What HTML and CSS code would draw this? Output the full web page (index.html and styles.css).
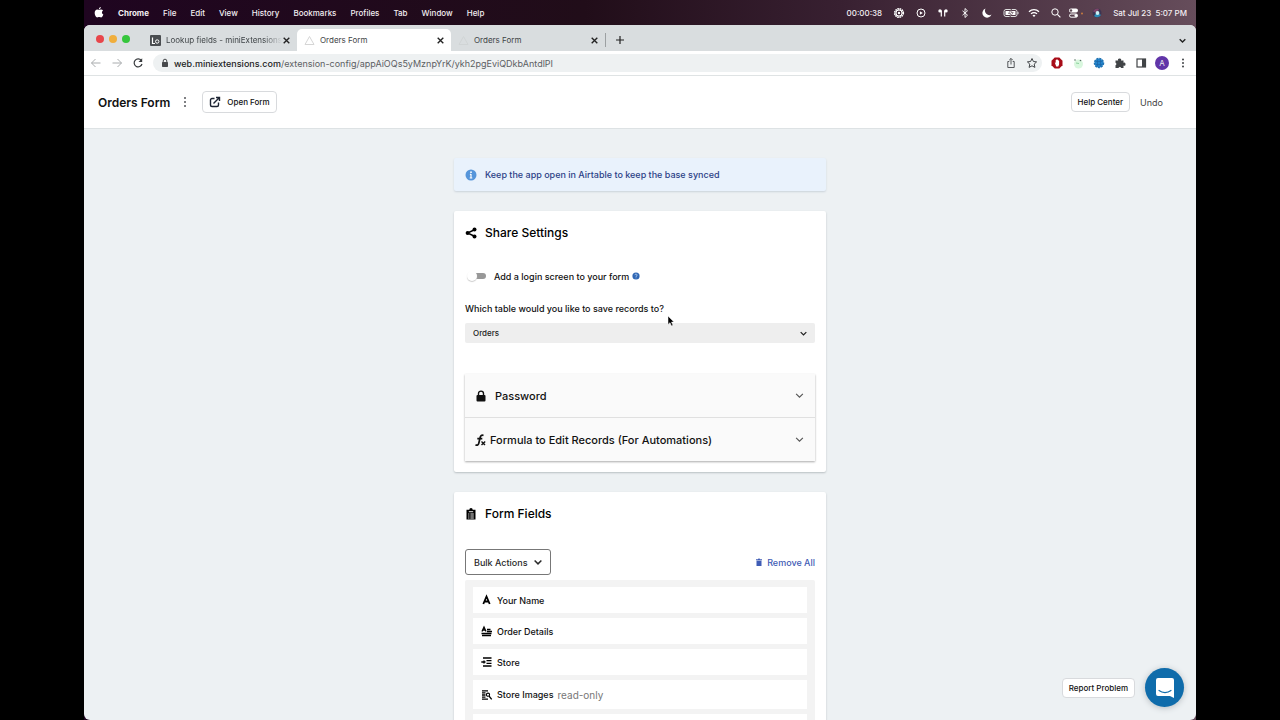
FILE: index.html
```html
<!DOCTYPE html>
<html lang="en">
<head>
    <meta charset="utf-8">
    <title>Orders Form</title>
    <link rel="stylesheet" href="styles.css">
</head>
<body>
    <div class="screen">
        <nav class="menubar">
            <div class="menus">
                <svg class="apple" viewBox="0 0 16 18"><path fill="#fff" d="M11 0c.2 1.700-1.300 3.700-3.100 3.700C7.700 2 9.300.2 11 0zM8 4.700c.8 0 1.800-.9 3.400-.8 1.300.1 2.500.7 3.200 1.800-2.700 1.700-2.300 5.300.5 6.500-.7 2-2.100 4.900-3.900 4.900-1.200 0-1.700-.7-3.100-.7s-2 .7-3.100.7C3.100 17.100.9 13.300.9 9.800c0-3.400 2-5.800 4.300-5.800 1.200 0 2.100.7 2.800.7z"/></svg>
                <b>Chrome</b>
                <span>File</span>
                <span>Edit</span>
                <span>View</span>
                <span>History</span>
                <span>Bookmarks</span>
                <span>Profiles</span>
                <span>Tab</span>
                <span>Window</span>
                <span>Help</span>
            </div>
            <div class="status">
                <span>00:00:38</span>
                <svg viewBox="0 0 12 12"><circle cx="6" cy="6" r="4.200" fill="none" stroke="#fff" stroke-width="1.800" stroke-dasharray="1.600 .6"/><circle cx="6" cy="6" r="3" fill="none" stroke="#fff"/><circle cx="6" cy="6" r="1.200" fill="#fff"/></svg>
                <svg viewBox="0 0 12 12"><circle cx="6" cy="6" r="4" fill="none" stroke="#fff"/><path d="M4.900 4.300v3.400L7.800 6z" fill="#fff"/></svg>
                <svg viewBox="0 0 12 12"><path d="M4.300 9.500V3.500M7.700 9.500V3.500" stroke="#fff" stroke-width="1.200"/><circle cx="3" cy="3.900" r="1.700" fill="#fff"/><circle cx="9" cy="3.900" r="1.700" fill="#fff"/></svg>
                <svg viewBox="0 0 12 12"><path d="M3.500 3.800l5 4.400L6 10.500v-9l2.500 2.300-5 4.400" fill="none" stroke="#fff" stroke-width=".9"/></svg>
                <svg viewBox="0 0 12 12"><path d="M4.500 1.500A4.700 4.700 0 1 0 10.500 7.600 4.500 4.500 0 0 1 4.500 1.500z" fill="#fff"/></svg>
                <svg class="battery" viewBox="0 0 17 12"><rect x="1" y="2.500" width="13" height="7" rx="2" fill="none" stroke="#ddd"/><rect x="2.500" y="4" width="10" height="4" rx=".5" fill="#fff"/><path d="M15 4.800v2.400" stroke="#ddd"/><path d="M8.500 2L5.500 6.500h2L7 10l3.200-4.600H8z" fill="#fff" stroke="#49343f" stroke-width=".6"/></svg>
                <svg viewBox="0 0 12 12"><g fill="none" stroke="#fff" stroke-width="1.300"><path d="M1 4.700a7.100 7.100 0 0 1 10 0"/><path d="M3 6.900a4.300 4.300 0 0 1 6 0"/></g><path d="M4.500 8.500a2.200 2.200 0 0 1 3 0L6 10z" fill="#fff"/></svg>
                <svg viewBox="0 0 12 12"><circle cx="5" cy="5" r="3.200" fill="none" stroke="#fff"/><path d="M7.400 7.400l3 3" stroke="#fff" stroke-width="1.200"/></svg>
                <svg class="control" viewBox="0 0 17 12"><rect x="1" y="1.500" width="9" height="4" rx="2" fill="#fff"/><circle cx="3" cy="3.500" r="1.200" fill="#5a4451"/><rect x="1.500" y="7" width="8" height="3.200" rx="1.600" fill="none" stroke="#fff"/><circle cx="8" cy="8.600" r="1.500" fill="#fff"/><circle cx="14" cy="6.500" r="1" fill="#c87b3f"/></svg>
                <svg viewBox="0 0 12 12"><circle cx="6" cy="6" r="4.500" fill="#3d3451"/><path d="M2 4.500a4.500 4.500 0 0 1 6-2.500L6 6z" fill="#7d4468"/><path d="M3 9a4.500 4.500 0 0 0 7-1L6 5z" fill="#2b8ab5"/><circle cx="6.500" cy="6" r="1.900" fill="#c9f0f3"/></svg>
                <span class="clock">Sat Jul 23&nbsp; 5:07 PM</span>
            </div>
        </nav>

        <div class="browser">
            <div class="tabs">
                <div class="lights"><i class="red"></i><i class="yellow"></i><i class="green"></i></div>
                <div class="tab">
                    <svg class="favicon" viewBox="0 0 11 11"><rect width="11" height="11" rx="1" fill="#4a4d50"/><path d="M2.500 2.500v6H5" fill="none" stroke="#fff" stroke-width="1.200"/><circle cx="7.200" cy="6.500" r="1.700" fill="none" stroke="#fff"/></svg>
                    <span class="tab-title fade">Lookup fields - miniExtensions</span>
                    <button class="close" aria-label="Close tab"><svg viewBox="0 0 8 8"><path d="M1.500 1.500l5 5m0-5l-5 5"/></svg></button>
                </div>
                <div class="tab active">
                    <svg class="favicon" viewBox="0 0 11 11"><path d="M5.500 1.500L10 9.500H1z" fill="none" stroke="#d5d5d5"/></svg>
                    <span class="tab-title">Orders Form</span>
                    <button class="close" aria-label="Close tab"><svg viewBox="0 0 8 8"><path d="M1.500 1.500l5 5m0-5l-5 5"/></svg></button>
                </div>
                <div class="tab">
                    <svg class="favicon" viewBox="0 0 11 11"><path d="M5.500 1.500L10 9.500H1z" fill="none" stroke="#d0d4d5"/></svg>
                    <span class="tab-title">Orders Form</span>
                    <button class="close" aria-label="Close tab"><svg viewBox="0 0 8 8"><path d="M1.500 1.500l5 5m0-5l-5 5"/></svg></button>
                </div>
                <button class="new-tab" aria-label="New tab"><svg viewBox="0 0 10 10"><path d="M5 1v8M1 5h8"/></svg></button>
                <button class="tab-search" aria-label="Search tabs"><svg viewBox="0 0 8 8"><path d="M1.500 2.800L4 5.300l2.500-2.500"/></svg></button>
            </div>

            <div class="toolbar">
                <button aria-label="Back"><svg viewBox="0 0 12 12"><path d="M10.500 6h-9m4-4l-4 4 4 4" fill="none" stroke="#a9acae"/></svg></button>
                <button aria-label="Forward"><svg viewBox="0 0 12 12"><path d="M1.500 6h9m-4-4l4 4-4 4" fill="none" stroke="#a9acae"/></svg></button>
                <button aria-label="Reload"><svg viewBox="0 0 12 12"><path d="M9.300 3.400A4 4 0 1 0 10 7" fill="none" stroke="#36393c" stroke-width="1.200"/><path d="M10.200 1.300v3.700H6.500z" fill="#36393c"/></svg></button>
                <div class="address">
                    <svg class="lock" viewBox="0 0 8 10"><path d="M2.200 4.500V3a1.800 1.800 0 0 1 3.600 0v1.500" fill="none" stroke="#47494c"/><rect x="1" y="4" width="6" height="5" rx=".7" fill="#47494c"/></svg>
                    <span class="url"><b>web.miniextensions.com</b>/extension-config/appAiOQs5yMznpYrK/ykh2pgEviQDkbAntdlPI</span>
                    <button aria-label="Share"><svg viewBox="0 0 12 12"><path d="M4.300 4.500H2.800v6h6.400v-6H7.700M6 7.500v-6M4.200 3.200L6 1.400l1.800 1.800" fill="none" stroke="#55585b"/></svg></button>
                    <button aria-label="Bookmark"><svg viewBox="0 0 12 12"><path d="M6 1.500l1.400 3 3.200.4-2.400 2.200.7 3.300L6 8.800l-2.900 1.600.7-3.300L1.400 4.900l3.200-.4z" fill="none" stroke="#404346"/></svg></button>
                </div>
                <button aria-label="Ad blocker"><svg viewBox="0 0 12 12"><path d="M3.700.5h4.600l3.200 3.200v4.600l-3.200 3.200H3.700L.5 8.300V3.700z" fill="#a80c18"/><path d="M3.800 5.500l.9.300V3h.8V2.300h1V3h.9v.8h.7v3.400L7.300 9.500H5.200z" fill="#fff"/></svg></button>
                <button aria-label="Extension"><svg viewBox="0 0 12 12"><circle cx="6.500" cy="7" r="4.500" fill="#d9f7de"/><circle cx="3" cy="3" r=".8" fill="#587363"/><circle cx="8.500" cy="3.500" r=".8" fill="#587363"/><path d="M4 6l3 .5" stroke="#8bd39d"/></svg></button>
                <button aria-label="Extension"><svg viewBox="0 0 12 12"><circle cx="6" cy="6" r="4.500" fill="#2383cc" stroke="#2173b1" stroke-width="1.500" stroke-dasharray="2 1"/><path d="M3 4.500h6M3 7.500h6M4.500 3v6m3-6v6" stroke="#1c65a4" stroke-width=".7"/></svg></button>
                <button aria-label="Extensions"><svg viewBox="0 0 12 12"><path d="M1.500 3.500h2.700a1.500 1.500 0 1 1 2.800 0h2.500v2.300a1.500 1.500 0 1 1 0 2.800V11H7.200a1.400 1.400 0 0 0-2.700 0h-3V8.300a1.400 1.400 0 0 0 0-2.600z" fill="#414447"/></svg></button>
                <button aria-label="Side panel"><svg viewBox="0 0 12 12"><rect x="2" y="2" width="8.500" height="8" fill="none" stroke="#414447" stroke-width="1.200"/><path d="M7 2h3.500v8H7z" fill="#414447"/></svg></button>
                <button class="avatar">A</button>
                <button aria-label="Menu"><svg viewBox="0 0 12 12" fill="#404346"><circle cx="6" cy="2.500" r="1"/><circle cx="6" cy="6" r="1"/><circle cx="6" cy="9.500" r="1"/></svg></button>
            </div>

            <header class="page-header">
                <h1>Orders Form</h1>
                <button class="more" aria-label="More"><svg viewBox="0 0 12 12" fill="#54565a"><circle cx="6" cy="2" r="1"/><circle cx="6" cy="6" r="1"/><circle cx="6" cy="10" r="1"/></svg></button>
                <button class="btn open-form"><svg viewBox="0 0 12 12"><path d="M5.500 2.500H3A1.500 1.500 0 0 0 1.500 4v5A1.500 1.500 0 0 0 3 10.500h5A1.500 1.500 0 0 0 9.500 9V6.500M4.500 7.500l5.700-5.700M7 1.500h3.500V5" fill="none" stroke="#1d2433" stroke-width="1.400"/></svg>Open Form</button>
                <button class="btn help">Help Center</button>
                <button class="undo">Undo</button>
            </header>

            <main class="page">
                <div class="column">
                    <div class="notice">
                        <svg viewBox="0 0 12 12"><circle cx="6" cy="6" r="5.500" fill="#5595da"/><path d="M6 5v4M4.900 5.300H6M4.700 9h2.600" stroke="#fff" stroke-width="1.200"/><circle cx="6" cy="3.200" r=".9" fill="#fff"/></svg>
                        Keep the app open in Airtable to keep the base synced
                    </div>

                    <section class="card">
                        <h2><svg viewBox="0 0 12 12"><path d="M10 2.500L2.500 6 10 9.500" fill="none" stroke="#000" stroke-width="1.400"/><circle cx="9.500" cy="2.600" r="2" /><circle cx="2.600" cy="6" r="2"/><circle cx="9.500" cy="9.400" r="2"/></svg>Share Settings</h2>
                        <div class="login-row">
                            <input type="checkbox" class="toggle" id="login">
                            <label for="login">Add a login screen to your form</label>
                            <svg viewBox="0 0 8 8"><circle cx="4" cy="4" r="3.600" fill="#2f66b4"/><path d="M2.900 3.200a1.100 1.100 0 1 1 1.500 1L4 4.500V5m0 .5v.8" fill="none" stroke="#bcd5f5" stroke-width=".8"/></svg>
                        </div>
                        <label class="question" for="table">Which table would you like to save records to?</label>
                        <div class="select-wrap">
                            <select id="table">
                                <option>Orders</option>
                            </select>
                            <svg viewBox="0 0 8 8"><path d="M1.500 2.800L4 5.300l2.500-2.500" fill="none" stroke="#222" stroke-width="1.100"/></svg>
                        </div>
                        <div class="accordion">
                            <button class="panel">
                                <svg class="panel-icon" viewBox="0 0 12 12"><path d="M3.500 5.500V3.600a2.500 2.500 0 0 1 5 0v1.900" fill="none" stroke="#111" stroke-width="1.400"/><rect x="1.500" y="5" width="9" height="6.500" rx="1" fill="#111"/></svg>
                                <span class="panel-title wide">Password</span>
                                <svg class="chevron" viewBox="0 0 8 8"><path d="M1 2.500l3 3 3-3"/></svg>
                            </button>
                            <button class="panel">
                                <svg class="panel-icon" viewBox="0 0 12 12"><path d="M8.500 1.600C6.700.6 5.600 1.700 5.200 3.200L3.800 9.200C3.500 10.900 2.200 11.600.5 10.700M2.300 4.700h5" fill="none" stroke="#111" stroke-width="1.700"/><path d="M6.500 7.500L10 11M10.200 7.500L6.500 11" fill="none" stroke="#111" stroke-width="1.400"/></svg>
                                <span class="panel-title">Formula to Edit Records (For Automations)</span>
                                <svg class="chevron" viewBox="0 0 8 8"><path d="M1 2.500l3 3 3-3"/></svg>
                            </button>
                        </div>
                    </section>

                    <section class="card">
                        <h2><svg viewBox="0 0 12 12"><path d="M1.500 1.800h2.800a1.700 1.700 0 0 1 3.400 0h2.800v9.700h-9z"/><path d="M3.800 3.700h4.400M3.200 6h1.200m1 0h3.400M3.200 8h1.200m1 0h3.400M3.200 10h1.200m1 0h3.400" stroke="#fff" stroke-width=".9"/></svg>Form Fields</h2>
                        <div class="actions">
                            <button class="bulk">Bulk Actions<svg viewBox="0 0 8 8"><path d="M1.300 2.800L4 5.500l2.700-2.700" fill="none" stroke="#2a2a2a" stroke-width="1.200"/></svg></button>
                            <button class="remove"><svg viewBox="0 0 8 8"><path d="M1 1.200h2l.4-.7h1.200l.4.700h2v1H1zM1.500 2.700h5V8h-5z" fill="#3f5cb5"/></svg>Remove All</button>
                        </div>
                        <ul class="fields">
                            <li><svg viewBox="0 0 12 12"><path d="M2.300 10L5.500 2.500 8.700 10M3.500 7.500h4" fill="none" stroke="#000" stroke-width="1.800"/></svg>Your Name</li>
                            <li><svg viewBox="0 0 12 12"><path d="M1 6.500L3 2l2 4.500M1.800 5h2.500M6 4.500h3.500M6 6.500h5M.5 8.500h10M1 10.500h9" fill="none" stroke="#000" stroke-width="1.300"/></svg>Order Details</li>
                            <li><svg viewBox="0 0 12 12"><path d="M2 2h8.500M5.500 4.700h5M5.500 7.300h5M2 10h8.500M.3 6h4.200M3 4.500v3" fill="none" stroke="#000" stroke-width="1.300"/></svg>Store</li>
                            <li class="lookup"><svg viewBox="0 0 12 12"><path d="M1 1.800h6M1 3.900h3.500M1 6h3.500M1 8.100h3.500M1 10.200h6" stroke="#000" stroke-width="1.300"/><circle cx="7" cy="5.700" r="1.600" fill="none" stroke="#000" stroke-width="1.100"/><path d="M8 7l2.700 3.300" stroke="#000" stroke-width="1.300"/></svg>Store Images <span class="readonly">read-only</span></li>
                            <li></li>
                        </ul>
                    </section>
                </div>

                <div class="support">
                    <button class="btn report">Report Problem</button>
                    <button class="chat" aria-label="Open chat"><svg viewBox="0 0 20 22"><path d="M3 1h14a2 2 0 0 1 2 2v18l-4-2H3a2 2 0 0 1-2-2V3a2 2 0 0 1 2-2z" fill="#fff"/><path d="M4 13.500c3.500 2.700 8.500 2.700 12 0" fill="none" stroke="#0f6cab" stroke-width="1.200" stroke-linecap="round"/></svg></button>
                </div>
            </main>
        </div>

        <svg class="cursor" viewBox="0 0 8 12"><path d="M1 1v8.500l2-1.800L4.500 11l1.500-.7-1.500-3.200H7z" fill="#000" stroke="#fff" stroke-width=".5"/></svg>
    </div>
</body>
</html>
```

FILE: styles.css
```css
body {
    margin: 0;
    background-color: #000;
    font-family: Inter, "Liberation Sans", sans-serif;
    font-size: 9px;
    color: #111;
}
button {
    font: inherit;
    color: inherit;
    background: none;
    border: none;
    padding: 0;
    display: flex;
    align-items: center;
}
svg {
    display: block;
    width: 12px;
    height: 12px;
    flex-shrink: 0;
}
.screen {
    position: relative;
    display: flex;
    flex-direction: column;
    height: 100vh;
    margin: 0 84px;
    overflow: hidden;
    background: linear-gradient(90deg, #1f0520 0%, #210d19 45%, #382031 68%, #664d5b 100%);
}

/* mac menu bar */
.menubar {
    display: flex;
    justify-content: space-between;
    align-items: center;
    height: 25px;
    padding: 0 9px 0 10px;
    color: #f3eef2;
    font-size: 8px;
    font-weight: 500;
    white-space: nowrap;
}
.menus {
    display: flex;
    align-items: center;
    gap: 14px;
}
.apple {
    width: 10px;
    height: 11px;
}
.status {
    display: flex;
    align-items: center;
    gap: 10px;
}
.status span:first-child {
    margin-right: 1px;
}
.battery,
.control {
    width: 17px;
}
.battery {
    margin-right: -2px;
}
.control {
    margin: 0 -4px;
}

/* browser window */
.browser {
    flex: 1;
    min-height: 0;
    display: flex;
    flex-direction: column;
    overflow: hidden;
    border-radius: 6px;
    background-color: #edf1f3;
}
.tabs {
    display: flex;
    align-items: flex-end;
    height: 26px;
    padding-right: 9px;
    background-color: #d9dddf;
    color: #3f4447;
    font-size: 8px;
}
.lights {
    display: flex;
    gap: 5px;
    padding: 0 12px 8px;
    margin-right: 1px;
}
.lights i {
    width: 8px;
    height: 8px;
    border-radius: 50%;
}
.red {
    background-color: #e8464b;
}
.yellow {
    background-color: #f0ae3c;
}
.green {
    background-color: #35c63c;
}
.tab {
    display: flex;
    align-items: center;
    width: 154px;
    height: 22px;
    padding: 0 6px 0 7px;
    box-sizing: border-box;
    border-radius: 5px 5px 0 0;
}
.tab.active {
    background-color: #fff;
}
.favicon {
    width: 11px;
    height: 11px;
    margin-right: 5px;
}
.tab-title {
    flex: 1;
    white-space: nowrap;
}
.fade {
    -webkit-mask-image: linear-gradient(90deg, #000 85%, transparent);
    mask-image: linear-gradient(90deg, #000 85%, transparent);
}
.close svg,
.tab-search svg {
    width: 9px;
    height: 9px;
}
.tabs button svg {
    fill: none;
    stroke: #222;
    stroke-width: 1.2;
}
.new-tab {
    height: 14px;
    margin-bottom: 4px;
    padding-left: 9px;
    border-left: 1px solid #9ca0a2;
}
.new-tab svg {
    width: 10px;
    height: 10px;
}
.tab-search {
    margin: 0 0 6px auto;
}
.toolbar {
    display: flex;
    align-items: center;
    gap: 9px;
    height: 24px;
    padding: 0 7px 0 6px;
    border-bottom: 1px solid #dfe3e4;
    background-color: #fff;
}
.address {
    flex: 1;
    display: flex;
    align-items: center;
    gap: 9px;
    height: 18px;
    padding: 0 4px 0 8px;
    border-radius: 9px;
    background-color: #eef1f2;
}
.lock {
    width: 8px;
    height: 10px;
}
.url {
    flex: 1;
    margin-left: -4px;
    color: #5c6063;
}
.url b {
    color: #222;
    font-weight: 500;
}
.avatar {
    justify-content: center;
    width: 14px;
    height: 14px;
    margin: 0 -1px;
    border-radius: 50%;
    background-color: #6135a8;
    color: #eee;
    font-size: 8px;
}

/* extension page */
.page-header {
    display: flex;
    align-items: center;
    height: 52px;
    padding: 0 33px 0 14px;
    border-bottom: 1px solid #dde2e4;
    background-color: #fff;
}
h1 {
    margin: 0;
    font-size: 12px;
    font-weight: 600;
}
.more {
    margin: 0 11px 0 9px;
}
.btn {
    justify-content: center;
    height: 20px;
    padding: 0 6px;
    border: 1px solid #d8dadd;
    border-radius: 4px;
    background-color: #fff;
    font-size: 8px;
    font-weight: 500;
    white-space: nowrap;
}
.open-form {
    height: 22px;
}
.open-form svg {
    margin-right: 6px;
}
.help {
    margin-left: auto;
}
.undo {
    margin-left: 10px;
    color: #444;
}
.page {
    position: relative;
    flex: 1;
    min-height: 0;
    overflow: hidden;
}
.column {
    max-width: 372px;
    margin: 0 auto;
    padding-top: 29px;
}
.notice {
    display: flex;
    align-items: center;
    gap: 8px;
    height: 33px;
    padding: 0 11px;
    border-radius: 2px;
    background-color: #e9f2fc;
    box-shadow: 0 1px 2px #cbd3da;
    color: #2c4187;
    font-weight: 500;
}
.card {
    margin-top: 20px;
    padding: 0 11px 11px;
    border-radius: 2px;
    background-color: #fff;
    box-shadow: 0 1px 2px #b9bfc2;
}
h2 {
    display: flex;
    align-items: center;
    gap: 8px;
    height: 43px;
    margin: 0;
    font-size: 12px;
    font-weight: 500;
    color: #000;
}
.login-row {
    display: flex;
    align-items: center;
    height: 14px;
    margin-top: 15px;
    font-weight: 500;
}
.login-row svg {
    width: 8px;
    height: 8px;
    margin-left: 3px;
}
.toggle {
    appearance: none;
    display: flex;
    align-items: center;
    width: 16px;
    height: 6px;
    margin: 0 8px 0 5px;
    border-radius: 3px;
    background-color: #989898;
}
.toggle::before {
    content: "";
    width: 10px;
    height: 10px;
    margin-left: -3px;
    border-radius: 50%;
    background-color: #fff;
    box-shadow: 0 1px 1px #ccc;
}
.question {
    display: block;
    margin-top: 19px;
    line-height: 14px;
    font-weight: 500;
}
.select-wrap {
    position: relative;
    margin-top: 7px;
}
.select-wrap svg {
    position: absolute;
    top: 6px;
    right: 7px;
    width: 9px;
    height: 9px;
    pointer-events: none;
}
select {
    appearance: none;
    display: block;
    width: 100%;
    height: 20px;
    padding: 0 8px;
    border: none;
    border-radius: 2px;
    background-color: #eee;
    color: #222;
    font: 500 8px Inter, "Liberation Sans", sans-serif;
}
.accordion {
    margin-top: 31px;
    background-color: #fafafa;
    box-shadow: 0 1px 2px #aaa;
}
.panel {
    width: 100%;
    height: 43px;
    padding: 0 11px 0 10px;
    font-size: 11px;
    font-weight: 500;
}
.panel + .panel {
    height: 44px;
    border-top: 1px solid #e0e0e0;
}
.panel-icon {
    margin-right: 3px;
}
.panel-title.wide {
    margin-left: 5px;
}
.chevron {
    width: 9px;
    height: 9px;
    margin-left: auto;
    fill: none;
    stroke: #555;
}
.actions {
    display: flex;
    justify-content: space-between;
    align-items: center;
    margin-top: 14px;
}
.bulk {
    gap: 5px;
    height: 26px;
    padding: 0 7px 0 8px;
    border: 1px solid #777;
    border-radius: 3px;
    font-weight: 500;
    color: #2a2a2a;
}
.bulk svg {
    width: 10px;
    height: 10px;
}
.remove {
    gap: 4px;
    color: #3f5cb5;
    font-weight: 500;
}
.remove svg {
    width: 8px;
    height: 8px;
}
.fields {
    display: flex;
    flex-direction: column;
    gap: 5px;
    margin: 5px 0 0;
    padding: 7px 8px;
    border-radius: 2px;
    background-color: #f3f3f3;
    list-style: none;
}
.fields li {
    display: flex;
    align-items: center;
    gap: 4px;
    height: 26px;
    padding: 0 8px;
    background-color: #fff;
    font-weight: 500;
}
.fields .lookup {
    height: 29px;
}
.readonly {
    color: #777;
    font-size: 10px;
    font-weight: 400;
}

/* floats over the page */
.support {
    position: absolute;
    right: 12px;
    bottom: 13px;
    display: flex;
    align-items: center;
    gap: 10px;
}
.chat {
    justify-content: center;
    width: 39px;
    height: 39px;
    border-radius: 50%;
    background-color: #0f6cab;
    box-shadow: 0 1px 6px #b5bcc0;
}
.chat svg {
    width: 20px;
    height: 22px;
}
.cursor {
    position: absolute;
    left: 583px;
    top: 315px;
    width: 8px;
    height: 12px;
}
```
